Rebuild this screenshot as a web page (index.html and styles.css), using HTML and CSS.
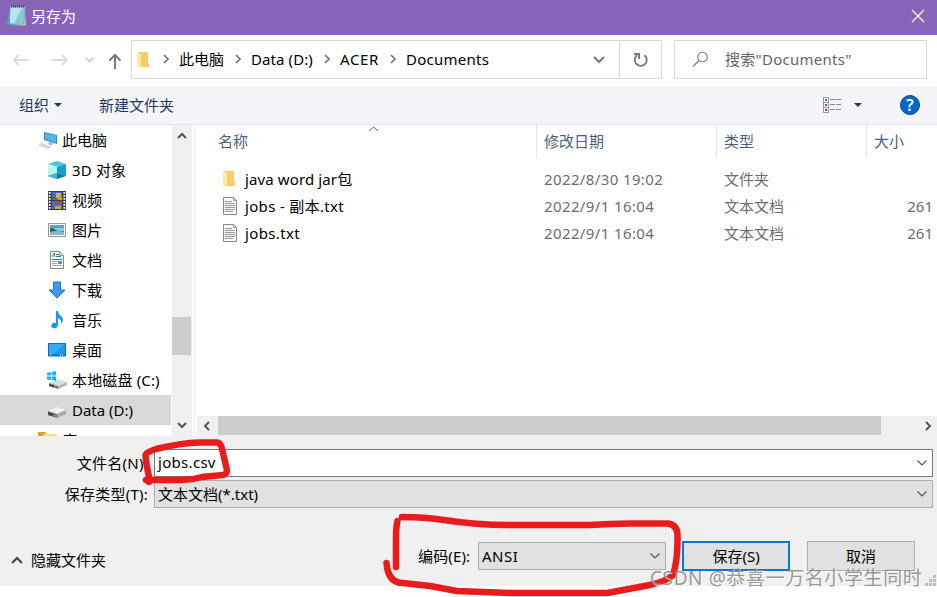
FILE: index.html
```html
<!DOCTYPE html>
<html lang="zh-CN">
<head>
<meta charset="utf-8">
<title>另存为</title>
<link rel="stylesheet" href="styles.css">
</head>
<body>
<div class="dialog">
  <header class="titlebar">
    <svg class="app-icon" width="20" height="22" viewBox="0 0 20 22"><path d="M3 2L0 18.500l4 2L18 20z" fill="#5f9fb4"/><path d="M3 2h15l-1.500 17H3z" fill="#86cbd8"/><path d="M4 3h11L7 18H3z" fill="#b9e6ec"/><path d="M18 3l1 17.500-14-.5 12-1z" fill="#c9c5a4"/><path d="M4 1.500h14" stroke="#4b4660" stroke-width="2" stroke-dasharray="1 1"/></svg>
    <span class="title">另存为</span>
    <svg class="close" width="14" height="14" viewBox="0 0 14 14"><path d="M1 1l12 12M13 1L1 13" stroke="#fff" stroke-width="1.300"/></svg>
  </header>

  <nav class="nav">
    <div class="nav-buttons">
      <svg width="131" height="39" viewBox="0 0 131 39" fill="none">
        <path d="M28 20H14M19 15l-5 5 5 5M52 20h15M62 15l5 5-5 5" stroke="#dcdcdc" stroke-width="1.800"/>
        <path d="M86 18l3.500 3.500L93 18" stroke="#d0d0d0" stroke-width="1.800"/>
        <path d="M115 29V15M109.500 20.500L115 15l5.500 5.500" stroke="#777" stroke-width="2"/>
      </svg>
    </div>
    <div class="address">
      <svg class="addr-folder" width="14" height="18" viewBox="0 0 14 18"><path d="M2 1h10v10l1 1v4H2z" fill="#f5ce68"/><path d="M1 1l4 2v14l-4-2z" fill="#ffe9a6"/></svg>
      <svg class="sep" width="6" height="10" viewBox="0 0 6 10"><path d="M1 1l4 4-4 4"/></svg>
      <span class="crumb c1">此电脑</span>
      <svg class="sep" width="6" height="10" viewBox="0 0 6 10"><path d="M1 1l4 4-4 4"/></svg>
      <span class="crumb c2">Data (D:)</span>
      <svg class="sep" width="6" height="10" viewBox="0 0 6 10"><path d="M1 1l4 4-4 4"/></svg>
      <span class="crumb c3">ACER</span>
      <svg class="sep" width="6" height="10" viewBox="0 0 6 10"><path d="M1 1l4 4-4 4"/></svg>
      <span class="crumb c4">Documents</span>
      <svg class="addr-down" width="12" height="8" viewBox="0 0 12 8"><path d="M1 1l5 5 5-5" fill="none" stroke="#777" stroke-width="2"/></svg>
      <div class="refresh"><svg width="16" height="16" viewBox="0 0 16 16" fill="none" stroke="#777" stroke-width="1.900"><path d="M11.500 3.200A6 6 0 1 1 4 3.200"/><path d="M1 2h5v5"/></svg></div>
    </div>
    <div class="search">
      <svg width="17" height="17" viewBox="0 0 17 17" fill="none" stroke="#777" stroke-width="1.100"><circle cx="10.500" cy="6" r="4.800"/><path d="M7 9.500L1 15.500"/></svg>
      <span>搜索"Documents"</span>
    </div>
  </nav>

  <div class="toolbar">
    <span>组织</span><i class="caret"></i>
    <span class="new-folder">新建文件夹</span>
    <svg class="view" width="19" height="17" viewBox="0 0 19 17"><path d="M.5.5h5v15h-5zM.5 5.500h5M.5 10.500h5" fill="#fff" stroke="#999"/><path d="M7 2.500h5M13 2.500h5M7 7.500h5M13 7.500h5M7 12.500h5M13 12.500h5" stroke="#888"/><path d="M2 2h2v2H2z" fill="#2b6da8"/><path d="M2 7h2v2H2z" fill="#567"/><path d="M2 12h2v2H2z" fill="#c3301c"/></svg>
    <i class="caret caret-view"></i>
    <span class="help">?</span>
  </div>

  <main class="body">
    <ul class="tree">
      <li class="root"><svg width="20" height="18" viewBox="0 0 20 18"><path d="M6 1l13 3v9L6 9z" fill="#3a86c4"/><path d="M7 2.200l11 2.600v6.700L7 8z" fill="#4db8f5"/><path d="M11 11l4 1.200-1 2-4-1z" fill="#a9b3bb"/><path d="M0 14l4-2 10 4-4 2z" fill="#d3d8dc"/></svg>此电脑</li>
      <li><svg width="18" height="18" viewBox="0 0 18 18"><path d="M0 3l9-3 9 3-9 3z" fill="#45c9d8"/><path d="M0 3l9 3v6l-9 3z" fill="#bdf3f5"/><path d="M18 3L9 6v6l9 3z" fill="#129fd4"/><path d="M0 15l9-3 9 3-9 3z" fill="#087b9c"/><path d="M0 15l9-3v6z" fill="#39bfcd"/></svg><span class="t1">3D 对象</span></li>
      <li><svg width="18" height="19" viewBox="0 0 18 19"><path d="M0 0h18v19H0z" fill="#3c3c40"/><path d="M1.700 1v18M16.300 1v18" stroke="#fff" stroke-width="1.800" stroke-dasharray="1.800 1.200"/><path d="M4 1h10v8H4zM4 10h10v8H4z" fill="#426fd0"/><path d="M8 2h5v3l-3 2H8z" fill="#e4b632"/><path d="M4 7h5v2H4zM8 10h5v3H8z" fill="#c94827"/><path d="M10 6h4v3h-4zM7 15h6v3H7z" fill="#c0aa28"/><path d="M4 6h4v2H4z" fill="#367c40"/></svg>视频</li>
      <li><svg width="18" height="14" viewBox="0 0 18 14"><path d="M.5.5h17v13H.5z" fill="#fff" stroke="#999"/><path d="M2 2h14v10H2z" fill="#8fc4ef"/><path d="M2 2h14v3H2z" fill="#5c9fe0"/><path d="M2 5q4 0 6 2t8 1v2H2z" fill="#2d6262"/><path d="M2 9q6-2 14 0v3H2z" fill="#87b8c5"/></svg>图片</li>
      <li><svg width="18" height="18" viewBox="0 0 18 18"><path d="M2.500.5h9l4 4v13h-13z" fill="#fff" stroke="#888"/><path d="M11.500.5v4h4" fill="none" stroke="#999"/><path d="M4 6l2-4 1 4M8 3.500h3M8 5.500h5M4 8.500h10" stroke="#1685c9" fill="none"/><path d="M4 10.500h5M4 12.500h5M4 14.500h10" stroke="#9ab"/><path d="M10 10h4v3h-4z" fill="#4a94bd"/></svg>文档</li>
      <li><svg width="18" height="18" viewBox="0 0 18 18"><path d="M5.500 1h7v8h4.500L9 17 1 9h4.500z" fill="#3f9aeb" stroke="#2576bf"/></svg>下载</li>
      <li><svg width="18" height="18" viewBox="0 0 18 18"><path d="M8 0h2q0 3 3 5 4 3 0 8 1-4-3-6v7q-1 4-5 3-3-1-1-4 1.500-2 4-1z" fill="#109af0"/></svg>音乐</li>
      <li><svg width="18" height="14" viewBox="0 0 18 14"><path d="M.5.500h17v12.500H.5z" fill="#149cf4" stroke="#1170ad"/><path d="M1 1h16L5 11H1z" fill="#35acfa"/><path d="M0 12h18" stroke="#15679e"/><path d="M2 12h2M12 12h4" stroke="#fff" stroke-dasharray="1 1"/></svg>桌面</li>
      <li><svg width="20" height="18" viewBox="0 0 20 18" class="wide"><path d="M2 12l9-4 9 3-9 4z" fill="#dcdcdc"/><path d="M2 12l9 3v3l-9-3z" fill="#777"/><path d="M11 15l9-4v3l-9 4z" fill="#b5b5b5"/><path d="M2 13l5 1.500v2L2 15z" fill="#444"/><path d="M7 15h2v1H7z" fill="#3bd34b"/><path d="M0 2l4-1v3.500H0zM5 1l4-1v4.500H5zM0 5.500h4V9L0 8.500zM5 5.500h4V10L5 9z" fill="#14b4f0"/></svg><span class="t2">本地磁盘 (C:)</span></li>
      <li class="selected"><svg class="disk" width="18" height="12" viewBox="0 0 18 12"><path d="M0 5l9-4 9 3-9 4z" fill="#f0f0f0"/><path d="M0 5l9 3v4L0 9z" fill="#777"/><path d="M9 8l9-4v4l-9 4z" fill="#a8a8a8"/><path d="M0 6l6 2v2.500L0 9z" fill="#444"/><path d="M5 9h2v1H5z" fill="#2fe046"/></svg><span class="t3">Data (D:)</span></li>
      <li class="root cut"><svg width="20" height="18" viewBox="0 0 20 18"><path d="M0 1h7l2 2v15H0z" fill="#e1a21b"/><path d="M5 3h13v15H5z" fill="#ffdc7b"/></svg>库</li>
    </ul>
    <div class="vscroll">
      <svg width="10" height="7" viewBox="0 0 10 7"><path d="M1 6l4-4 4 4"/></svg>
      <div class="vthumb"></div>
      <svg width="10" height="7" viewBox="0 0 10 7"><path d="M1 1l4 4 4-4"/></svg>
    </div>
    <section class="files">
      <div class="row head">
        <span class="name">名称<svg class="sort" width="11" height="6" viewBox="0 0 11 6"><path d="M1 5l4.500-4L10 5" fill="none" stroke="#666"/></svg></span><span>修改日期</span><span>类型</span><span>大小</span>
      </div>
      <div class="rows">
        <div class="row"><span class="name"><svg width="14" height="18" viewBox="0 0 14 18"><path d="M1 1h10v10l1 1v4H1z" fill="#f5ce68"/><path d="M0 1l4 2v14l-4-2z" fill="#ffe9a6"/></svg><b class="f1">java word jar包</b></span><span class="date">2022/8/30 19:02</span><span>文件夹</span><span></span></div>
        <div class="row"><span class="name"><svg width="14" height="18" viewBox="0 0 14 18"><path d="M.5.500h10l3 3v14H.5z" fill="#fafafa" stroke="#888"/><path d="M10.500.500v3h3M2 4.500h7M2 6.500h10M2 8.500h10M2 10.500h10M2 12.500h10M2 14.500h8" fill="none" stroke="#999"/></svg><b class="f2">jobs - 副本.txt</b></span><span class="date">2022/9/1 16:04</span><span>文本文档</span><span class="size">261</span></div>
        <div class="row"><span class="name"><svg width="14" height="18" viewBox="0 0 14 18"><path d="M.5.500h10l3 3v14H.5z" fill="#fafafa" stroke="#888"/><path d="M10.500.500v3h3M2 4.500h7M2 6.500h10M2 8.500h10M2 10.500h10M2 12.500h10M2 14.500h8" fill="none" stroke="#999"/></svg><b class="f3">jobs.txt</b></span><span class="date">2022/9/1 16:04</span><span>文本文档</span><span class="size">261</span></div>
      </div>
      <div class="hscroll">
        <svg width="7" height="10" viewBox="0 0 7 10"><path d="M6 1L2 5l4 4"/></svg>
        <div class="hthumb"></div>
        <svg width="7" height="10" viewBox="0 0 7 10"><path d="M1 1l4 4-4 4"/></svg>
      </div>
    </section>
  </main>

  <footer class="footer">
    <div class="field"><label>文件名(N):</label><div class="combo edit"><span class="fname">jobs.csv</span><svg width="10" height="6" viewBox="0 0 10 6"><path d="M.5.500L5 5 9.500.500"/></svg></div></div>
    <div class="field"><label>保存类型(T):</label><div class="combo"><span class="ftype">文本文档(*.txt)</span><svg width="10" height="6" viewBox="0 0 10 6"><path d="M.5.500L5 5 9.500.500"/></svg></div></div>
    <div class="actions">
      <svg class="hide-arrow" width="12" height="8" viewBox="0 0 12 8"><path d="M1 7l5-5 5 5" fill="none" stroke="#444" stroke-width="2"/></svg>
      <span class="hide">隐藏文件夹</span>
      <label class="enc">编码(E):</label>
      <div class="combo enc-box"><span class="ansi">ANSI</span><svg width="10" height="6" viewBox="0 0 10 6"><path d="M.5.500L5 5 9.500.500"/></svg></div>
      <button class="save">保存(S)</button>
      <button>取消</button>
    </div>
  </footer>
  <svg class="grip" width="11" height="11" viewBox="0 0 11 11"><path d="M8 0h3v3H8zM4 4h3v3H4zM8 4h3v3H8zM0 8h3v3H0zM4 8h3v3H4zM8 8h3v3H8z" fill="#bfbfbf"/></svg>
  <svg class="ink" width="937" height="597" viewBox="0 0 937 597">
    <path d="M149 477Q146 463 145.500 455Q146 452 156 449Q180 443 200 442.500H217Q221 443 222 449L227 470Q227 474 223 475L202 477Q192 480 182 480H146"/>
    <path d="M149 479v3" />
    <path d="M402 517Q425 517 444 520Q475 525 510 525H590Q615 523 640 523.500H667Q677 524 677.500 535Q678 560 673 575Q667 581 650 585L607 593H510L457 591L430 586L403 583Q388 583 386.500 563"/>
    <path d="M397.500 521Q396 526 396 540V567"/>
  </svg>
  <div class="watermark">CSDN @恭喜一万名小学生同时</div>
</div>
</body>
</html>
```
FILE: styles.css
```css
* { box-sizing: border-box; }
body { margin: 0; background: #fff; font: 15px/20px "Noto Sans", "Noto Sans CJK SC", sans-serif; color: #000; }
svg { flex: none; display: block; }
.dialog { position: relative; width: 937px; height: 597px; overflow: hidden; white-space: nowrap; }

.titlebar { height: 35px; background: #8764b8; color: #fff; display: flex; align-items: center; padding: 0 12px 3px 7px; }
.title { margin-left: 4px; }
.close { margin-left: auto; }

.nav { height: 51px; display: flex; padding: 5px 10px 7px 0; }
.nav-buttons { width: 131px; }
.address { width: 531px; height: 39px; border: 1px solid #d9d9d9; display: flex; align-items: center; padding-left: 4px; }
.addr-folder { margin-right: 13px; }
.sep { fill: none; stroke: #777; stroke-width: 1.700; margin-top: -2px; }
.crumb { margin-left: 10px; padding-bottom: 2px; }
.c1 { width: 56px; }
.c2 { width: 73px; letter-spacing: .1px; }
.c3 { width: 50px; letter-spacing: .6px; }
.c4 { width: 83px; letter-spacing: .25px; }
.addr-down { margin-left: auto; margin-right: 14px; }
.refresh { width: 42px; height: 37px; border-left: 1px solid #d9d9d9; display: flex; align-items: center; justify-content: center; }
.search { width: 253px; height: 39px; border: 1px solid #d9d9d9; margin-left: 12px; display: flex; align-items: center; padding-left: 17px; color: #666; }
.search span { margin-left: 16px; padding-bottom: 2px; letter-spacing: .27px; }

.toolbar { height: 39px; background: #f4f5f8; border-bottom: 1px solid #e3e5e8; display: flex; align-items: center; padding: 0 17px 0 19px; color: #1e395b; }
.caret { border: 4px solid transparent; border-top-color: #1e395b; border-bottom: 0; margin-left: 5px; }
.new-folder { margin-left: 37px; }
.view { margin-left: auto; }
.caret-view { margin-left: 12px; }
.help { width: 20px; height: 20px; border-radius: 50%; background: #0567cb; border: 1px solid #064a86; color: #fff; margin-left: 38px; text-align: center; line-height: 18px; font-size: 16px; font-weight: 600; }

.body { height: 311px; display: flex; }
.tree { width: 171px; margin: 0; padding: 0; list-style: none; overflow: hidden; }
.tree li { height: 30px; display: flex; align-items: center; gap: 6px; padding-left: 48px; }
.tree .root { padding-left: 38px; gap: 4px; }
.tree .wide { margin: 0 -1px; }
.tree .disk { margin-top: 4px; }
.tree li.selected { background-color: #d9d9d9; }
.t1, .t2 { letter-spacing: .15px; }
.vscroll { width: 20px; margin-left: 1px; background: #f0f0f0; display: flex; flex-direction: column; align-items: center; padding: 7px 1px 7px 0; }
.vscroll path, .hscroll path { fill: none; stroke: #555; stroke-width: 2; }
.vthumb { width: 19px; height: 38px; background: #cdcdcd; margin: 178px 0 auto; }
.files { flex: 1; margin-left: 2px; border-left: 1px solid #f0f0f0; display: flex; flex-direction: column; min-width: 0; }
.row { display: grid; grid-template-columns: 341px 180px 150px 1fr; height: 27px; align-items: center; color: #6d6d6d; }
.row > span { padding-left: 8px; }
.head { height: 33px; color: #4c607a; }
.head > span { height: 33px; line-height: 33px; border-left: 1px solid #e5e5e5; padding-left: 7px; }
.row > .name { padding-left: 28px; display: flex; align-items: center; }
.head > .name { padding-left: 23px; border-left: 0; position: relative; }
.sort { position: absolute; left: 173px; top: 1px; }
.name b { font-weight: 400; color: #000; margin-left: 8px; }
.f1 { letter-spacing: .12px; }
.f2 { letter-spacing: .33px; }
.f3 { letter-spacing: .35px; }
.date { letter-spacing: .38px; }
.rows { padding-top: 7px; flex: 1; }
.row > .size { padding: 0 4px 0 0; text-align: right; }
.hscroll { height: 20px; margin-left: 2px; background: #f0f0f0; display: flex; align-items: center; padding: 0 5px 0 6px; }
.hthumb { width: 663px; height: 19px; margin: 0 auto 1px 8px; background: #cdcdcd; }

.footer { height: 150px; background: #f0f0f0; padding: 13px 4px 0 0; }
.field { display: flex; height: 28px; margin-bottom: 3px; }
.field label { width: 154px; padding-right: 6px; text-align: right; line-height: 28px; letter-spacing: .25px; }
.combo { flex: 1; height: 28px; border: 1px solid #adadad; background: #e1e1e1; display: flex; align-items: center; justify-content: space-between; padding: 0 5px 0 3px; }
.combo path { fill: none; stroke: #555; stroke-width: 1.200; }
.edit { background: #fff; border-color: #7a7a7a; }
.fname { letter-spacing: .3px; padding-bottom: 2px; }
.ansi { letter-spacing: .5px; }
.actions { display: flex; align-items: center; height: 30px; margin-top: 33px; padding-right: 18px; }
.hide-arrow { margin: 8px 0 0 11px; }
.hide { margin: 8px 0 0 8px; }
.enc { margin-left: 312px; width: 60px; letter-spacing: .15px; }
.enc-box { flex: none; width: 188px; }
.actions button { width: 108px; height: 30px; padding: 0; border: 1px solid #adadad; background: #e1e1e1; font: inherit; margin-left: 17px; }
.actions .save { border: 2px solid #0078d7; margin-left: 16px; }

.grip { position: absolute; left: 925px; top: 575px; }
.ink { position: absolute; left: 0; top: 0; fill: none; stroke: #e81c1c; stroke-width: 6.500; stroke-linecap: round; stroke-linejoin: round; }
.watermark { position: absolute; left: 650px; top: 566px; font-size: 19px; letter-spacing: .6px; line-height: 24px; color: rgba(135,135,135,.85); text-shadow: 1px 1px 0 rgba(255,255,255,.7); }
```
